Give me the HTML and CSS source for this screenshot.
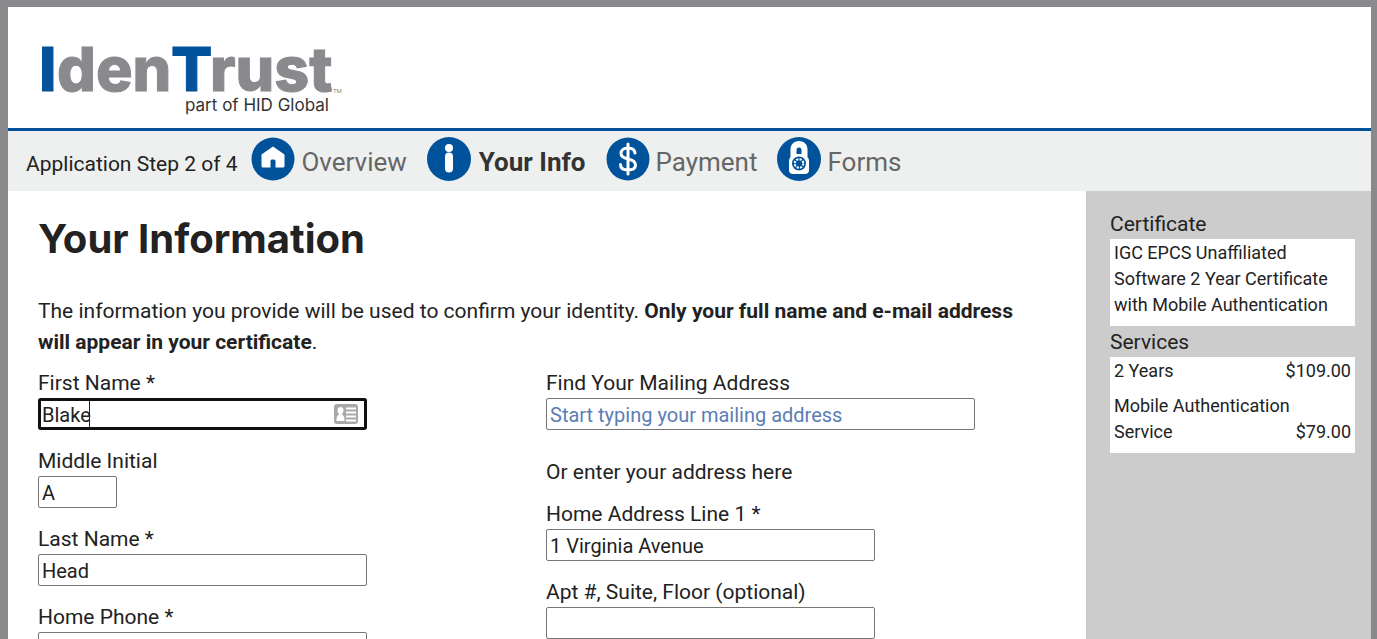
FILE: index.html
```html
<!DOCTYPE html>
<html lang="en">
<head>
    <meta charset="UTF-8">
    <meta name="viewport" content="width=device-width, initial-scale=1.0">
    <title>IdenTrust - Your Information</title>
    <link rel="stylesheet" href="styles.css">
</head>
<body>
    <div class="page">
        <header class="header">
            <svg class="logo" width="304" height="74" viewBox="0 0 304 74" role="img" aria-label="IdenTrust part of HID Global">
                <g class="logo-name">
                    <text class="blue" x="-1" y="49">I</text>
                    <text x="17" y="49">den</text>
                    <text class="blue" x="131" y="49">T</text>
                    <text x="170" y="49">rust</text>
                </g>
                <text class="logo-tm" x="293" y="51">TM</text>
                <text class="logo-sub" x="145" y="69">part of HID Global</text>
            </svg>
        </header>

        <nav class="steps">
            <span class="steps-count">Application Step 2 of 4</span>
            <a class="step" href="#">
                <svg width="44" height="44" viewBox="0 0 44 44">
                    <circle cx="22" cy="22" r="21.5" fill="#00539b"/>
                    <path d="M22 9.5 L33.5 17.5 V29 Q33.5 30.5 32 30.5 H24.5 V24 Q24.5 22.5 23 22.5 H21 Q19.5 22.5 19.5 24 V30.5 H12 Q10.5 30.5 10.5 29 V17.5 Z" fill="#fff"/>
                </svg>
                <span>Overview</span>
            </a>
            <a class="step current" href="#">
                <svg width="44" height="44" viewBox="0 0 44 44">
                    <circle cx="22" cy="22" r="22" fill="#00539b"/>
                    <circle cx="22" cy="11" r="4" fill="#fff"/>
                    <rect x="18" y="15.5" width="8" height="20" rx="4" fill="#fff"/>
                </svg>
                <span>Your Info</span>
            </a>
            <a class="step" href="#">
                <svg width="44" height="44" viewBox="0 0 44 44">
                    <circle cx="22" cy="22" r="21.5" fill="#00539b"/>
                    <path d="M22 7 V37 M29 16 C28.5 12.5 25.5 11 22 11 C18 11 15 13 15 16.5 C15 20 18 21 22 22 C26.5 23 29.5 24.5 29.5 28 C29.5 31.5 26.5 33 22 33 C17.5 33 14.5 31 14.5 27.5" fill="none" stroke="#fff" stroke-width="3" stroke-linecap="round"/>
                </svg>
                <span>Payment</span>
            </a>
            <a class="step" href="#">
                <svg width="44" height="44" viewBox="0 0 44 44">
                    <circle cx="22" cy="22" r="22" fill="#00539b"/>
                    <path d="M13.5 20 V12.5 C13.5 7.5 17 4 22 4 C27 4 30.5 7.5 30.5 12.5 V20 Q32 21.5 32 24 V33 Q32 37 28 37 H16 Q12 37 12 33 V24 Q12 21.5 13.5 20 Z" fill="#fff"/>
                    <path d="M19.5 17 V13 Q19.5 10.5 22 10.5 Q24.5 10.5 24.5 13 V17 Z" fill="#00539b"/>
                    <circle cx="22" cy="26.5" r="7" fill="#00539b"/>
                    <circle cx="22" cy="26.5" r="4.3" fill="none" stroke="#fff" stroke-width="2" stroke-dasharray="2.2 1.177"/>
                </svg>
                <span>Forms</span>
            </a>
        </nav>

        <div class="content">
            <main class="main">
                <h1>Your Information</h1>
                <p class="intro">The information you provide will be used to confirm your identity. <strong>Only your full name and e-mail address will appear in your certificate</strong>.</p>

                <form class="form">
                    <div class="column">
                        <div class="field">
                            <label for="firstName">First Name *</label>
                            <div class="input-wrap">
                                <input type="text" id="firstName" class="active" value="Blake">
                                <span class="caret"></span>
                                <svg class="card-icon" width="24" height="20" viewBox="0 0 24 20">
                                    <rect width="24" height="20" rx="3" fill="#a9a9a9"/>
                                    <ellipse cx="6.5" cy="6.5" rx="3" ry="3.5" fill="#fff"/>
                                    <path d="M5 8 H8 V10.5 C10 11.5 10.5 13 10.5 17 H2.5 C2.5 13 3 11.5 5 10.5 Z" fill="#fff"/>
                                    <path d="M12 4.5 H22 M12 8.5 H22 M12 12.5 H22 M12 16.5 H22" stroke="#fff" stroke-width="2"/>
                                </svg>
                            </div>
                        </div>
                        <div class="field">
                            <label for="middleInitial">Middle Initial</label>
                            <input type="text" id="middleInitial" class="short" value="A">
                        </div>
                        <div class="field">
                            <label for="lastName">Last Name *</label>
                            <input type="text" id="lastName" value="Head">
                        </div>
                        <div class="field">
                            <label for="homePhone">Home Phone *</label>
                            <input type="text" id="homePhone">
                        </div>
                    </div>

                    <div class="column">
                        <div class="field">
                            <label for="findAddress">Find Your Mailing Address</label>
                            <input type="text" id="findAddress" class="wide" placeholder="Start typing your mailing address">
                        </div>
                        <p class="or">Or enter your address here</p>
                        <div class="field">
                            <label for="address1">Home Address Line 1 *</label>
                            <input type="text" id="address1" value="1 Virginia Avenue">
                        </div>
                        <div class="field">
                            <label for="address2">Apt #, Suite, Floor (optional)</label>
                            <input type="text" id="address2">
                        </div>
                    </div>
                </form>
            </main>

            <aside class="sidebar">
                <h2>Certificate</h2>
                <div class="box">
                    <p>IGC EPCS Unaffiliated Software 2 Year Certificate with Mobile Authentication</p>
                </div>
                <h2>Services</h2>
                <div class="box">
                    <div class="service">
                        <span>2 Years</span>
                        <span>$109.00</span>
                    </div>
                    <div class="service">
                        <span>Mobile Authentication Service</span>
                        <span>$79.00</span>
                    </div>
                </div>
            </aside>
        </div>
    </div>
</body>
</html>
```
FILE: styles.css
```css
* {
    box-sizing: border-box;
}
body {
    margin: 0;
    padding: 7px 6px 0 8px;
    background-color: #8a8a8c;
    color: #222;
    font-family: Roboto, sans-serif;
    font-size: 21px;
    line-height: 31px;
}
.page {
    display: flex;
    flex-direction: column;
    min-height: calc(100vh - 7px);
    background-color: #fff;
}
/* Header */
.header {
    padding: 35px 32px 12px;
    border-bottom: 3px solid #00539b;
}
.logo {
    display: block;
    overflow: visible;
}
.logo-name {
    font-family: Inter, sans-serif;
    font-size: 61px;
    font-weight: 800;
    fill: #8a8a8e;
    stroke: #8a8a8e;
    stroke-width: 1px;
}
.logo-name .blue {
    fill: #00539b;
    stroke: #00539b;
}
.logo-sub {
    font-family: Inter, sans-serif;
    font-size: 17px;
    fill: #333;
}
.logo-tm {
    font-size: 6px;
    fill: #8a8a8e;
}
/* Steps */
.steps {
    display: flex;
    align-items: center;
    height: 60px;
    padding: 0 18px 4px;
    background-color: #eef0f0;
}
.steps-count {
    margin-right: 14px;
    padding-top: 10px;
}
.step {
    display: flex;
    align-items: center;
    gap: 6px;
    margin-right: 20px;
    color: #666;
    font-size: 26px;
    text-decoration: none;
}
.step span {
    padding-top: 6px;
}
.step.current {
    gap: 8px;
    color: #333;
    font-weight: bold;
}
/* Content */
.content {
    display: flex;
    flex: 1;
}
.main {
    flex: 1;
    padding: 24px 32px 15px 30px;
}
h1 {
    margin: 0 0 33px;
    font-family: Inter, sans-serif;
    font-size: 40px;
    line-height: 48px;
}
.intro {
    max-width: 1000px;
    margin: 0 0 9px;
}
.form {
    display: grid;
    grid-template-columns: 1fr 1fr;
}
.field {
    margin-bottom: 15px;
}
label,
h2 {
    display: block;
    padding-top: 2px;
    line-height: 29px;
}
input {
    display: block;
    width: 329px;
    max-width: 100%;
    height: 32px;
    padding: 2px 3px 0;
    border: 1px solid #767676;
    border-radius: 2px;
    background-color: #fff;
    color: #222;
    font-family: Roboto, sans-serif;
    font-size: 20px;
}
input::placeholder {
    color: #5b7db5;
}
input.active {
    outline: 3px solid #101010;
    outline-offset: -3px;
    border-radius: 3px;
}
input.short {
    width: 79px;
}
input.wide {
    width: 429px;
}
.input-wrap {
    position: relative;
    width: 329px;
    max-width: 100%;
}
.caret {
    position: absolute;
    top: 3px;
    left: 51px;
    width: 1px;
    height: 26px;
    background-color: #222;
}
.card-icon {
    position: absolute;
    top: 6px;
    right: 9px;
}
.or {
    margin: 27px 0 10px;
}
/* Sidebar */
.sidebar {
    width: 285px;
    padding: 17px 16px 24px 24px;
    background-color: #ccc;
}
h2 {
    margin: 0;
    font-size: 21px;
    font-weight: normal;
}
.box {
    padding: 1px 4px 0;
    background-color: #fff;
    font-size: 18px;
    line-height: 26px;
}
.box p {
    margin: 0;
    padding-bottom: 8px;
}
.service {
    display: flex;
    justify-content: space-between;
    align-items: flex-end;
    padding-bottom: 9px;
}
.service:last-child {
    padding-bottom: 8px;
}
```
